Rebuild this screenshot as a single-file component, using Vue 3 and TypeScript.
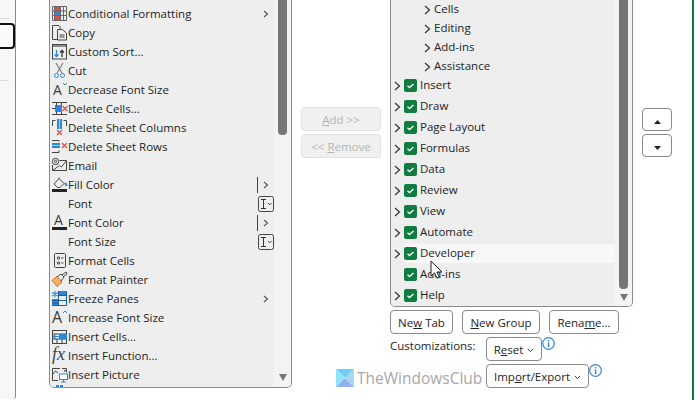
<script setup lang="ts">
interface Command {
  label: string
  icon: string
  trail?: 'chevron' | 'split' | 'combo'
}

interface TabRow {
  label: string
  child?: boolean
  expandable?: boolean
  hovered?: boolean
}

const ink = 'stroke="#444" fill="none"'
const blue = '#2b88d8'
const red = '#e8484a'
const redX = (x: number, y: number) =>
  `<path d="M${x} ${y}l5 5m0-5l-5 5" stroke="${red}" stroke-width="1.2" fill="none"/>`

const icons: Record<string, string> = {
  conditional: `<rect x="3.5" y="1" width="5.5" height="5" fill="${red}"/><rect x="3.5" y="6" width="5.5" height="4.5" fill="${blue}"/><rect x="3.5" y="10.5" width="5.5" height="4.5" fill="${red}"/><path d="M1.5 1.5h14v14h-14zM1.5 6h14M1.5 10.5h14M9.500 1.500v14M12.500 1.500v14M3.500 1.500v14" stroke="#666" fill="none"/>`,
  copy: `<path d="M6.500 15.500h-5v-14h6.500l1 1v2.500M6.500 5.500h5l4 3.500v7h-9zM8.500 11h5M8.500 13h5" ${ink}/>`,
  sort: `<rect x="1" y="1" width="15" height="3" fill="#8a8a8a"/><rect x="1.500" y="1.500" width="14" height="14.500" ${ink}/><path d="M5.500 7v6.500M3.500 11.500l2 2 2-2" stroke="${blue}" stroke-width="1.300" fill="none"/><path d="M11 14V7.500M9 9.500l2-2 2 2" stroke="#333" stroke-width="1.300" fill="none"/>`,
  cut: `<path d="M5 1l6 10M12 1l-6 10" stroke="#777" stroke-width="1.100" fill="none"/><circle cx="5.500" cy="13.500" r="2" stroke="${blue}" fill="none"/><circle cx="11.500" cy="13.500" r="2" stroke="${blue}" fill="none"/>`,
  decrease: `<text x="2" y="14" font-size="14" font-family="Open Sans" fill="#3c3c3c">A</text><path d="M12 2l2 2 2-2" stroke="${blue}" fill="none"/>`,
  deleteCells: `<path d="M1 2.500h15M1 14.500h15M1 8.500h4M5.500 2.500v12M10.500 2.500v3M10.500 11.500v3" stroke="#444" fill="none"/><rect x="4.500" y="5.500" width="6" height="6" fill="${blue}" stroke="#1d5f9a" stroke-width=".6"/>${redX(11.500, 6)}`,
  deleteColumns: `<path d="M1.500 7V1.500h3M15.500 7V1.500h-3" ${ink}/><rect x="6" y="0" width="5" height="10" fill="${blue}"/><path d="M8.500 0v10" stroke="#a9d3f5"/>${redX(6, 11)}`,
  deleteRows: `<rect x="1" y="5" width="8" height="5" fill="${blue}"/><path d="M1 7.500h8" stroke="#a9d3f5"/><path d="M1 2.500h7v1M1 14.500h7v-2" ${ink}/>${redX(11, 5)}`,
  email: `<circle cx="4.500" cy="4.500" r="3.200" ${ink}/><circle cx="4.500" cy="4.500" r="1.200" ${ink}/><path d="M1.500 8v5.500h14v-10h-7M1.500 13.500l7-5 2 1.500 5-6.500" ${ink}/>`,
  fill: `<rect x="1" y="13" width="15" height="3" fill="#222"/><path d="M3 8l5-5.500 5 5-4 4h-2.500zM8 2.500v-1" ${ink}/><path d="M14 7c1 1 1.500 2 1.500 3" stroke="${blue}" stroke-width="2" fill="none"/>`,
  fontColor: `<rect x="1" y="13" width="15" height="3" fill="#222"/><text x="3" y="11" font-size="14" font-family="Open Sans" fill="#3c3c3c">A</text>`,
  formatCells: `<rect x="3.500" y="1.500" width="11" height="14" rx="1" ${ink}/><path d="M6.500 5h2v2h-2zM6.500 10h2v2h-2z" stroke="#555" fill="none"/><path d="M10 6h2.500M10 11h2.500" stroke="#555"/>`,
  painter: `<path d="M1 9.500l5-4 5 5.500-5 4.500c-1.500-2-3-4-5-6z" fill="#f7b26a" stroke="#d9701c"/><path d="M6 6l4-3 3 3-3 4" fill="none" stroke="#444"/><path d="M11 4l4-3 1 2-4 3" fill="none" stroke="#444"/>`,
  freeze: `<rect x="1" y="9" width="6" height="7" fill="${blue}"/><rect x="8" y="1" width="8" height="4" fill="${blue}"/><path d="M1.500 15.500h14v-14M7.500 1v15M7.500 5.500h8M1 10.500h15M1 13h6" stroke="#1d5f9a" fill="none"/><path d="M4 1v6.500M1 2.500l6 3.500M7 2.500l-6 3.500" stroke="${blue}" stroke-width="1.100"/>`,
  increase: `<text x="1" y="14" font-size="16" font-family="Open Sans" fill="#3c3c3c">A</text><path d="M12 4l2-2 2 2" stroke="${blue}" fill="none"/>`,
  insertCells: `<rect x="1.500" y="2.500" width="14" height="13" ${ink}/><path d="M1.500 6h14M1.500 11h14M6 11v4.500M11 11v4.500" ${ink}/><rect x="8" y="6" width="8" height="5" fill="${blue}"/><path d="M9 8.500H2.500M5 6l-2.500 2.500L5 11" stroke="${blue}" stroke-width="1.200" fill="none"/>`,
  fx: `<text x="1" y="13" font-size="18" font-style="italic" font-family="Liberation Serif" fill="#444">fx</text>`,
  picture: `<path d="M9 2.500H1.500v12H7M11 2.500h4.500v4M2 8l2.500-3 2.500 2" ${ink}/><rect x="13" y="4" width="1.500" height="1.500" fill="#444"/><rect x="8.500" y="8" width="8" height="5.500" fill="#fff" stroke="${blue}"/><path d="M12.500 13.500v2.500M10 16h5" stroke="${blue}"/>`,
  next: `<rect x="5" y="0" width="3" height="2" fill="${blue}"/><rect x="9" y="0" width="3" height="2" fill="${blue}"/>`,
}

const commands: Command[] = [
  { label: 'Conditional Formatting', icon: 'conditional', trail: 'chevron' },
  { label: 'Copy', icon: 'copy' },
  { label: 'Custom Sort...', icon: 'sort' },
  { label: 'Cut', icon: 'cut' },
  { label: 'Decrease Font Size', icon: 'decrease' },
  { label: 'Delete Cells...', icon: 'deleteCells' },
  { label: 'Delete Sheet Columns', icon: 'deleteColumns' },
  { label: 'Delete Sheet Rows', icon: 'deleteRows' },
  { label: 'Email', icon: 'email' },
  { label: 'Fill Color', icon: 'fill', trail: 'split' },
  { label: 'Font', icon: '', trail: 'combo' },
  { label: 'Font Color', icon: 'fontColor', trail: 'split' },
  { label: 'Font Size', icon: '', trail: 'combo' },
  { label: 'Format Cells', icon: 'formatCells' },
  { label: 'Format Painter', icon: 'painter' },
  { label: 'Freeze Panes', icon: 'freeze', trail: 'chevron' },
  { label: 'Increase Font Size', icon: 'increase' },
  { label: 'Insert Cells...', icon: 'insertCells' },
  { label: 'Insert Function...', icon: 'fx' },
  { label: 'Insert Picture', icon: 'picture' },
  { label: '', icon: 'next' },
]

const tabs: TabRow[] = [
  { label: 'Cells', child: true },
  { label: 'Editing', child: true },
  { label: 'Add-ins', child: true },
  { label: 'Assistance', child: true },
  { label: 'Insert', expandable: true },
  { label: 'Draw', expandable: true },
  { label: 'Page Layout', expandable: true },
  { label: 'Formulas', expandable: true },
  { label: 'Data', expandable: true },
  { label: 'Review', expandable: true },
  { label: 'View', expandable: true },
  { label: 'Automate', expandable: true },
  { label: 'Developer', expandable: true, hovered: true },
  { label: 'Add-ins' },
  { label: 'Help', expandable: true },
]
</script>

<template>
  <div class="page">
    <aside class="rail">
      <div class="rail-line first"></div>
      <div class="rail-input"></div>
      <div class="rail-line second"></div>
    </aside>

    <main class="dialog">
      <section class="list commands">
        <div class="rows">
          <div v-for="item in commands" :key="item.icon + item.label" class="command">
            <svg class="cmd-icon" width="17" height="17" viewBox="0 0 17 17" v-html="icons[item.icon] ?? ''"></svg>
            <span class="cmd-label">{{ item.label }}</span>
            <svg v-if="item.trail === 'chevron'" class="cmd-chevron" width="6" height="8" viewBox="0 0 6 8">
              <path d="M1 1l3.500 3L1 7" stroke="#555" stroke-width="1.100" fill="none" />
            </svg>
            <template v-if="item.trail === 'split'">
              <span class="split-bar"></span>
              <svg class="split-chevron" width="6" height="8" viewBox="0 0 6 8">
                <path d="M1 1l3.500 3L1 7" stroke="#555" stroke-width="1.100" fill="none" />
              </svg>
            </template>
            <svg v-if="item.trail === 'combo'" class="combo" width="16" height="16" viewBox="0 0 16 16">
              <rect x=".5" y=".5" width="15" height="15" rx="2" stroke="#444" fill="none" />
              <path d="M3 3.500h5M3 12.500h5M5.500 3.500v9" stroke="#333" fill="none" />
              <path d="M10 7l1.800 1.800L13.600 7" stroke="#444" fill="none" />
            </svg>
          </div>
        </div>
        <div class="track">
          <div class="thumb commands-thumb"></div>
          <div class="arrow commands-arrow"></div>
        </div>
      </section>

      <section class="transfer">
        <button class="btn disabled" type="button"><u>A</u>dd &gt;&gt;</button>
        <button class="btn disabled" type="button">&lt;&lt; <u>R</u>emove</button>
      </section>

      <section class="tabs-column">
        <div class="list tabs">
          <div class="rows tree">
            <div
              v-for="(tab, i) in tabs"
              :key="i"
              class="tab"
              :class="{ child: tab.child }"
            >
              <span class="chevron-slot">
                <svg v-if="tab.child || tab.expandable" width="7" height="10" viewBox="0 0 7 10">
                  <path d="M1 1l4.500 4L1 9" stroke="#333" stroke-width="1.200" fill="none" />
                </svg>
              </span>
              <div class="tab-body" :class="{ hovered: tab.hovered }">
                <svg v-if="!tab.child" class="check" width="13" height="13" viewBox="0 0 13 13">
                  <rect width="13" height="13" rx="2" fill="#107c41" />
                  <path d="M3.500 6.800l2 1.800 4-3.600" stroke="#fff" stroke-width="1.300" fill="none" />
                </svg>
                <span class="tab-label">{{ tab.label }}</span>
              </div>
            </div>
          </div>
          <div class="track">
            <div class="thumb tabs-thumb"></div>
            <div class="arrow tabs-arrow"></div>
          </div>
          <svg class="pointer" width="14" height="20" viewBox="0 0 14 20">
            <path d="M1 1v15l3.500-3.200 2.500 5.400 2.300-1-2.400-5.200H12z" fill="#fff" stroke="#222" />
          </svg>
        </div>

        <div class="tab-actions">
          <button class="btn new-tab" type="button">Ne<u>w</u> Tab</button>
          <button class="btn new-group" type="button"><u>N</u>ew Group</button>
          <button class="btn rename" type="button">Rena<u>m</u>e...</button>
        </div>

        <div class="customizations">
          <span class="custom-label">Customizations:</span>
          <div class="custom-buttons">
            <div class="custom-row">
              <button class="btn reset" type="button">
                R<u>e</u>set
                <svg class="caret" width="7" height="5" viewBox="0 0 7 5"><path d="M.8 1l2.700 2.500L6.200 1" stroke="#333" fill="none" /></svg>
              </button>
              <svg class="info" width="13" height="13" viewBox="0 0 13 13">
                <circle cx="6.500" cy="6.500" r="5.800" stroke="#2b88d8" stroke-width="1.200" fill="#fff" />
                <rect x="5.800" y="5.500" width="1.500" height="4.500" fill="#2b88d8" />
                <rect x="5.800" y="3" width="1.500" height="1.500" fill="#2b88d8" />
              </svg>
            </div>
            <div class="custom-row">
              <button class="btn import" type="button">
                Imp<u>o</u>rt/Export
                <svg class="caret" width="7" height="5" viewBox="0 0 7 5"><path d="M.8 1l2.700 2.500L6.200 1" stroke="#333" fill="none" /></svg>
              </button>
              <svg class="info" width="13" height="13" viewBox="0 0 13 13">
                <circle cx="6.500" cy="6.500" r="5.800" stroke="#2b88d8" stroke-width="1.200" fill="#fff" />
                <rect x="5.800" y="5.500" width="1.500" height="4.500" fill="#2b88d8" />
                <rect x="5.800" y="3" width="1.500" height="1.500" fill="#2b88d8" />
              </svg>
            </div>
          </div>
        </div>
      </section>

      <section class="order">
        <button class="btn order-btn" type="button">
          <svg width="7" height="4" viewBox="0 0 7 4"><path d="M3.500 0L7 4H0z" fill="#222" /></svg>
        </button>
        <button class="btn order-btn" type="button">
          <svg width="7" height="4" viewBox="0 0 7 4"><path d="M3.500 4L0 0h7z" fill="#222" /></svg>
        </button>
      </section>
    </main>

    <div class="watermark">
      <svg width="18" height="18" viewBox="0 0 18 18">
        <path d="M0 0h18L9 9z" fill="#6ecdf2" />
        <path d="M0 0v18l9-9z" fill="#8fe4fa" />
        <path d="M0 18h18L9 9z" fill="#93b2ec" />
        <path d="M18 0v18L9 9z" fill="#a6d6f2" />
      </svg>
      <span>TheWindowsClub</span>
    </div>
  </div>
</template>

<style>
html,
body {
  margin: 0;
  background: #fff;
}
</style>

<style scoped>
.page {
  position: relative;
  display: flex;
  width: 700px;
  height: 400px;
  overflow: hidden;
  background: #fff;
  color: #242424;
  font-family: "Open Sans", "Noto Sans", sans-serif;
  font-size: 11.5px;
}

.rail {
  box-sizing: border-box;
  flex: none;
  width: 16px;
  height: 399px;
  padding-top: 18px;
  background: #f7f7f7;
  border-right: 1px solid #8a8a8a;
  border-bottom-right-radius: 3px;
}

.rail-line {
  width: 9px;
  height: 1px;
  background: #dcdcdc;
}

.rail-input {
  box-sizing: border-box;
  width: 15px;
  height: 26px;
  margin: 4px 0 31px;
  background: #fafafa;
  border: 2px solid #111;
  border-left: none;
  border-radius: 0 4px 4px 0;
}

.dialog {
  box-sizing: border-box;
  display: flex;
  flex: none;
  align-items: flex-start;
  gap: 9px;
  width: 678px;
  height: 400px;
  padding-left: 33px;
  border-right: 2px solid #107c41;
}

.list {
  position: relative;
  box-sizing: border-box;
  display: flex;
  flex: none;
  width: 243px;
  overflow: hidden;
  background: #f0f0f0;
  border: 1px solid #8a8a8a;
  border-top: none;
  border-radius: 0 0 5px 5px;
}

.commands {
  height: 388px;
}

.rows {
  flex: 1;
  min-width: 0;
  background: #eee;
}

.commands .rows {
  padding-top: 4px;
}

.command {
  display: flex;
  align-items: center;
  height: 19px;
  padding-left: 1px;
  white-space: nowrap;
}

.cmd-icon {
  flex: none;
  overflow: visible;
}

.cmd-label {
  flex: 1;
}

.cmd-chevron {
  margin-right: 5px;
}

.split-bar {
  width: 1px;
  height: 16px;
  margin-right: 5px;
  background: #444;
}

.split-chevron {
  margin-right: 5px;
}

.combo {
  flex: none;
}

.track {
  display: flex;
  flex: none;
  flex-direction: column;
  align-items: center;
  width: 17px;
  background: #f3f3f3;
}

.thumb {
  width: 9px;
  background: #767676;
  border-radius: 0 0 4px 4px;
}

.commands-thumb {
  height: 135px;
}

.tabs-thumb {
  height: 289px;
}

.arrow {
  width: 0;
  height: 0;
  border-top: 7px solid #767676;
  border-right: 4.500px solid transparent;
  border-left: 4.500px solid transparent;
}

.commands-arrow {
  margin-top: 239px;
}

.tabs-arrow {
  margin-top: 5px;
}

.transfer {
  display: flex;
  flex: none;
  flex-direction: column;
  gap: 3px;
  width: 80px;
  padding-top: 107px;
}

.btn {
  box-sizing: border-box;
  height: 24px;
  padding: 0;
  color: #242424;
  font: inherit;
  white-space: nowrap;
  background: #fff;
  border: 1px solid #8a8a8a;
  border-radius: 4px;
}

.btn.disabled {
  color: #b4b4b4;
  background: #f0f0f0;
  border-color: #e1e1e1;
}

.tabs-column {
  flex: none;
  width: 243px;
}

.tabs {
  height: 307px;
}

.tab {
  display: flex;
  align-items: center;
  height: 21px;
}

.tab.child {
  height: 19px;
  padding-left: 30px;
}

.tab.child + .tab:not(.child) {
  margin-top: -1px;
}

.tab-label {
  padding-bottom: 2px;
}

.chevron-slot {
  display: flex;
  flex: none;
  align-items: center;
  width: 13px;
  padding-left: 3px;
  box-sizing: border-box;
}

.tab-body {
  display: flex;
  flex: 1;
  align-items: center;
  height: 19px;
  border-radius: 3px;
}

.tab-body.hovered {
  background: #f8f8f8;
}

.check {
  flex: none;
  margin-right: 3px;
}

.pointer {
  position: absolute;
  top: 260px;
  left: 39px;
}

.tab-actions {
  display: flex;
  gap: 9px;
  margin-top: 3px;
}

.new-tab {
  width: 63px;
}

.new-group {
  width: 78px;
}

.rename {
  width: 70px;
}

.customizations {
  display: flex;
  margin-top: 3px;
}

.custom-label {
  flex: none;
  width: 96px;
  padding-top: 1px;
}

.custom-buttons {
  display: flex;
  flex-direction: column;
  gap: 3px;
}

.custom-row {
  display: flex;
  align-items: flex-start;
}

.reset {
  width: 56px;
}

.import {
  width: 103px;
}

.caret {
  margin-left: 1px;
  vertical-align: 1px;
}

.info {
  flex: none;
}

.order {
  display: flex;
  flex-direction: column;
  gap: 3px;
  padding-top: 108px;
}

.order-btn {
  width: 30px;
  height: 23px;
}

.watermark {
  position: absolute;
  top: 369px;
  left: 336px;
  display: flex;
  align-items: center;
  gap: 3px;
  color: #a8a8a8;
  font-size: 15.5px;
  line-height: 18px;
}
</style>
